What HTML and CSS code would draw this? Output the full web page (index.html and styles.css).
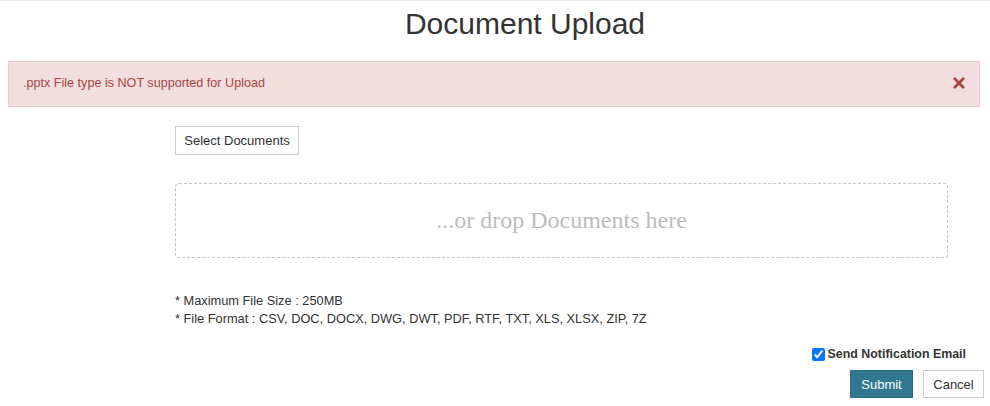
FILE: index.html
```html
<!DOCTYPE html>
<html>
<head>
<meta charset="utf-8">
<link rel="stylesheet" href="styles.css">
</head>
<body>
<div class="page">
  <h1 class="title">Document Upload</h1>
  <div class="alert">
    <span class="alert-text">.pptx File type is NOT supported for Upload</span>
    <svg class="alert-close" width="12" height="12" viewBox="0 0 12 12"><path d="M1.8 1.8 L10.2 10.2 M10.2 1.8 L1.8 10.2" stroke="#a94442" stroke-width="2.7" stroke-linecap="round"/></svg>
  </div>
  <div class="content">
    <div class="select-row"><button class="btn btn-select">Select Documents</button></div>
    <div class="dropzone">...or drop Documents here</div>
    <div class="notes">
      <div>* Maximum File Size : 250MB</div>
      <div>* File Format : CSV, DOC, DOCX, DWG, DWT, PDF, RTF, TXT, XLS, XLSX, ZIP, 7Z</div>
    </div>
  </div>
  <div class="footer">
    <label class="notify"><input type="checkbox" checked class="notify-box"><span>Send Notification Email</span></label>
    <div class="actions">
      <button class="btn btn-submit">Submit</button>
      <button class="btn btn-cancel">Cancel</button>
    </div>
  </div>
</div>
</body>
</html>
```
FILE: styles.css
```css
html, body {
  margin: 0;
  background: #fff;
}
body {
  font-family: "Liberation Sans", Arial, sans-serif;
  color: #333;
}
.page {
  border-top: 1px solid #e8e8e8;
  width: 990px;
}
.title {
  margin: 6px 0 0;
  padding-left: 60px;
  font-size: 30px;
  line-height: 34px;
  font-weight: 400;
  text-align: center;
  color: #333;
}
.alert {
  margin: 20px 10px 0 8px;
  height: 46px;
  box-sizing: border-box;
  background: #f2dede;
  border: 1px solid #ebccd1;
  color: #a94442;
  display: flex;
  align-items: center;
  justify-content: space-between;
  padding: 0 14px 3px 14px;
  font-size: 12.6px;
}
.alert-close {
  display: block;
  margin-top: 1px;
}
.content {
  margin-top: 19px;
  padding: 0 42px 0 175px;
}
.select-row {
  display: flex;
}
.btn {
  font-family: "Liberation Sans", Arial, sans-serif;
  font-size: 13px;
  box-sizing: border-box;
  margin: 0;
  cursor: pointer;
}
.btn-select {
  height: 29px;
  width: 124px;
  padding: 0;
  background: #fff;
  border: 1px solid #ccc;
  color: #333;
}
.dropzone {
  margin-top: 28px;
  height: 75px;
  box-sizing: border-box;
  border: 1px dashed #c4c4c4;
  border-radius: 4px;
  display: flex;
  align-items: center;
  justify-content: center;
  font-family: "Liberation Serif", "Times New Roman", serif;
  font-size: 24px;
  color: #bcbcbc;
}
.notes {
  margin-top: 34px;
  font-size: 12.8px;
  line-height: 18px;
  color: #333;
}
.footer {
  display: flex;
  flex-direction: column;
  align-items: flex-end;
}
.notify {
  margin-top: 18px;
  margin-right: 24px;
  display: flex;
  align-items: center;
  font-size: 12.4px;
  line-height: 16px;
  font-weight: 700;
  color: #333;
}
.notify-box {
  width: 13px;
  height: 13px;
  margin: 0 3px 0 0;
}
.actions {
  margin-top: 8px;
  margin-right: 6px;
  display: flex;
  gap: 10px;
}
.btn-submit {
  height: 28px;
  width: 63px;
  padding: 0;
  background: #2f7890;
  border: 1px solid #2a6c82;
  color: #fff;
}
.btn-cancel {
  height: 28px;
  width: 61px;
  padding: 0;
  background: #fff;
  border: 1px solid #ccc;
  color: #333;
}
```
